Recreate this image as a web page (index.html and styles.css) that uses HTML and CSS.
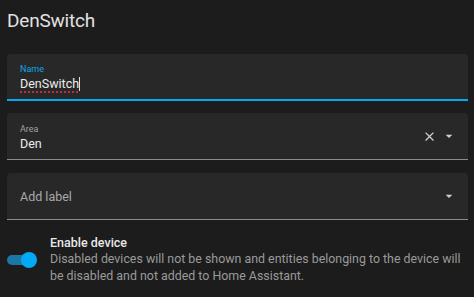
FILE: index.html
```html
<!DOCTYPE html>
<html>
<head>
<meta charset="utf-8">
<link rel="stylesheet" href="styles.css">
</head>
<body>
<div class="page">
  <h1 class="title">DenSwitch</h1>
  <div class="field focused">
    <div class="field-body">
      <span class="label label-active">Name</span>
      <span class="value"><span class="spell">DenSwitch</span><span class="caret"></span></span>
    </div>
  </div>
  <div class="field">
    <div class="field-body">
      <span class="label">Area</span>
      <span class="value">Den</span>
    </div>
    <div class="icons">
      <svg class="icon-x" width="15" height="15" viewBox="0 0 24 24"><path d="M19,6.41L17.59,5L12,10.59L6.41,5L5,6.41L10.59,12L5,17.59L6.41,19L12,13.41L17.59,19L19,17.59L13.41,12L19,6.41Z" fill="#cfcfcf"/></svg>
      <svg class="icon-drop" width="16" height="16" viewBox="0 0 24 24"><path d="M7,10L12,15L17,10H7Z" fill="#cfcfcf"/></svg>
    </div>
  </div>
  <div class="field">
    <div class="field-body single">
      <span class="placeholder">Add label</span>
    </div>
    <div class="icons">
      <svg class="icon-drop" width="16" height="16" viewBox="0 0 24 24"><path d="M7,10L12,15L17,10H7Z" fill="#cfcfcf"/></svg>
    </div>
  </div>
  <div class="toggle-row">
    <div class="switch"><span class="track"></span><span class="thumb"></span></div>
    <div class="toggle-text">
      <div class="toggle-title">Enable device</div>
      <div class="toggle-desc">Disabled devices will not be shown and entities belonging to the device will be disabled and not added to Home Assistant.</div>
    </div>
  </div>
</div>
</body>
</html>
```
FILE: styles.css
```css
html, body {
  margin: 0;
  padding: 0;
  background: #1c1c1c;
}
body {
  font-family: Roboto, "Liberation Sans", sans-serif;
  color: #e1e1e1;
  width: 474px;
  height: 297px;
  overflow: hidden;
}
.page {
  padding: 0 6px 0 7px;
}
.title {
  margin: 0;
  padding-top: 9px;
  height: 54px;
  box-sizing: border-box;
  font-size: 19px;
  letter-spacing: -0.2px;
  font-weight: 400;
  line-height: 24px;
  color: #e1e1e1;
}
.field {
  height: 47px;
  box-sizing: border-box;
  background: #282828;
  border-radius: 4px 4px 0 0;
  border-bottom: 1px solid #8c8c8c;
  display: flex;
  align-items: center;
  padding: 0 11px 0 13px;
  margin-bottom: 13px;
}
.field.focused {
  border-bottom: 2px solid #03a9f4;
  margin-bottom: 12px;
}
.field-body {
  flex: 1;
  display: flex;
  flex-direction: column;
  padding-top: 4px;
}
.field-body.single {
  padding-top: 0;
}
.label {
  font-size: 9px;
  line-height: 11px;
  color: #a0a0a0;
}
.label-active {
  color: #0ea5e6;
}
.value {
  font-size: 12.5px;
  line-height: 18px;
  color: #ececec;
  display: flex;
  align-items: center;
}
.spell {
  text-decoration: underline dotted #c0303a;
  text-underline-offset: 3px;
  text-decoration-thickness: 1.5px;
}
.caret {
  display: inline-block;
  width: 1px;
  height: 14px;
  background: #e0e0e0;
}
.placeholder {
  font-size: 12.5px;
  color: #a8a8a8;
}
.icons {
  display: flex;
  align-items: center;
  gap: 4px;
}
.toggle-row {
  display: flex;
  align-items: center;
  padding-top: 2px;
}
.switch {
  position: relative;
  width: 30px;
  height: 16px;
  margin-right: 13px;
  flex: none;
}
.track {
  position: absolute;
  left: 0;
  top: 3px;
  width: 26px;
  height: 10px;
  border-radius: 5px;
  background: #1b77a6;
}
.thumb {
  position: absolute;
  left: 14px;
  top: 0;
  width: 16px;
  height: 16px;
  border-radius: 50%;
  background: #03a9f4;
}
.toggle-text {
  flex: 1;
}
.toggle-title {
  font-size: 12.5px;
  font-weight: 500;
  line-height: 16px;
  color: #e8e8e8;
}
.toggle-desc {
  font-size: 12.4px;
  line-height: 16.5px;
  color: #9a9a9a;
}
```
